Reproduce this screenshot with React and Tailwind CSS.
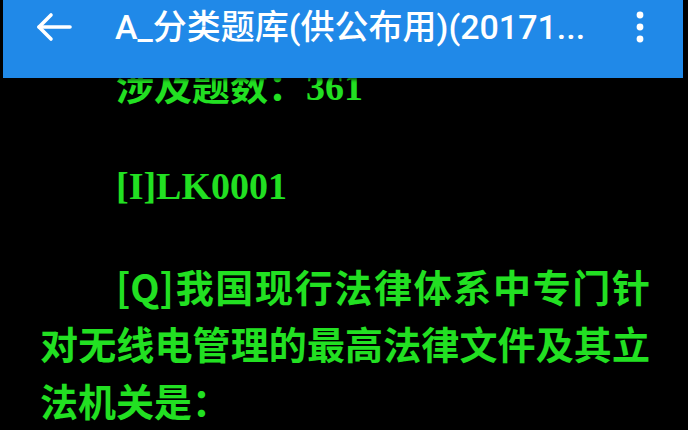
const cjk = '"Noto Sans CJK SC", "Noto Sans", sans-serif';
const serif = '"Liberation Serif", "Noto Sans CJK SC", serif';

function BackArrow() {
  return (
    <svg width="38" height="32" viewBox="0 0 38 32" fill="none" stroke="white" strokeWidth="3.6" strokeLinecap="round" strokeLinejoin="round">
      <path d="M3 16H34" />
      <path d="M15 4L3 16L15 28" />
    </svg>
  );
}

export default function App() {
  return (
    <div className="relative h-[430px] w-[688px] overflow-hidden bg-black">
      <header className="absolute left-[3px] right-[5px] top-0 z-10 h-[78px] bg-[#2089e8] shadow-[0_2px_3px_rgba(0,0,0,0.6)]">
        <div className="flex h-[54px] items-center">
          <div className="flex w-[112px] items-center pl-[33px]">
            <BackArrow />
          </div>
          <h1
            className="flex-1 whitespace-nowrap text-[34px] font-medium text-white"
            style={{ fontFamily: '"Roboto", "Noto Sans CJK SC", sans-serif' }}
          >
            A_分类题库(供公布用)(20171...
          </h1>
          <div className="flex w-[52px] items-center pl-[4px]">
            <svg width="10" height="36" viewBox="0 0 10 36" fill="white">
              <circle cx="5" cy="6" r="3.4" />
              <circle cx="5" cy="18" r="3.4" />
              <circle cx="5" cy="30" r="3.4" />
            </svg>
          </div>
        </div>
      </header>

      <main className="pl-[40px] pr-[38px] pt-[55px] text-[38px] font-bold leading-[57px] text-[#22e022]">
        <p className="indent-[2em]" style={{ fontFamily: serif }}>
          <span style={{ fontFamily: cjk }}>涉及题数：</span>361
        </p>
        <p className="mt-[42px] indent-[2em]" style={{ fontFamily: serif }}>
          [I]LK0001
        </p>
        <p className="mt-[42px] indent-[2em] text-justify" style={{ fontFamily: cjk }}>
          [Q]我国现行法律体系中专门针对无线电管理的最高法律文件及其立法机关是：
        </p>
      </main>
    </div>
  );
}
